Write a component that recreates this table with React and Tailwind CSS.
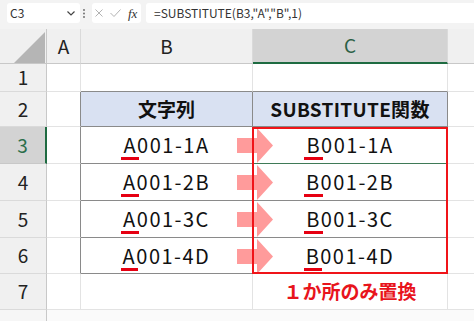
import React from 'react';

const rows = [
  { n: 3, src: '001-1A', out: '001-1A' },
  { n: 4, src: '001-2B', out: '001-2B' },
  { n: 5, src: '001-3C', out: '001-3C' },
  { n: 6, src: '001-4D', out: '001-4D' },
];

// red mark under the replaced letter
const Marked = ({ ch }) => (
  <span className="relative">
    {ch}
    <span className="absolute -left-[2px] -right-[2px] bottom-[-1px] h-[3px] bg-[#e60012]" />
  </span>
);

const Arrow = () => (
  <svg className="absolute z-[5] left-[156px] top-[1px]" width="36" height="35" viewBox="0 0 36 35">
    <polygon points="0,10 20,10 20,0 36,17.5 20,35 20,25 0,25" fill="#ff9b9b" />
  </svg>
);

const rowHead = 'flex items-center justify-center bg-[#f0f0f0] border-r border-b border-r-[#c8c8c8] border-b-[#dadada] text-[19px] text-[#222]';
const blank = 'border-r border-b border-[#e3e3e3] bg-white';

export default function App() {
  return (
    <div className="w-[474px] h-[321px] overflow-hidden bg-[#f3f3f3] font-['Noto_Sans_CJK_JP','Noto_Sans',sans-serif]">
      {/* formula bar */}
      <div className="h-[29px] flex items-start pt-[3px]">
        <div className="ml-[7px] w-[73px] h-[20px] rounded-[3px] bg-white flex items-center justify-between pl-[3px] pr-[5px] text-[12px] text-[#333]">
          <span>C3</span>
          <svg width="8" height="5" viewBox="0 0 8 5">
            <path d="M0.5 0.5 L4 4 L7.5 0.5" fill="none" stroke="#444" strokeWidth="1.2" />
          </svg>
        </div>
        <div className="ml-[2px] w-[4px] h-[20px] flex items-center justify-center">
          <svg width="2" height="9" viewBox="0 0 2 9">
            <circle cx="1" cy="1" r="0.9" fill="#666" />
            <circle cx="1" cy="4.5" r="0.9" fill="#666" />
            <circle cx="1" cy="8" r="0.9" fill="#666" />
          </svg>
        </div>
        <div className="ml-[6px] w-[49px] h-[20px] rounded-[3px] bg-white flex items-center pl-[3px]">
          <svg width="8" height="8" viewBox="0 0 8 8">
            <path d="M0.5 0.5 L7.5 7.5 M7.5 0.5 L0.5 7.5" stroke="#b3b3b3" strokeWidth="1" />
          </svg>
          <svg className="ml-[7px]" width="11" height="8" viewBox="0 0 11 8">
            <path d="M0.5 4 L4 7.5 L10.5 0.5" fill="none" stroke="#b3b3b3" strokeWidth="1" />
          </svg>
          <span className="ml-[7px] font-['Liberation_Serif',serif] italic text-[13px] leading-none text-[#333]">fx</span>
        </div>
        <div className="ml-[5px] flex-1 h-[20px] rounded-l-[3px] bg-white flex items-center pl-[8px] text-[12px] text-[#333]">
          =SUBSTITUTE(B3,"A","B",1)
        </div>
      </div>

      {/* sheet */}
      <div className="grid grid-cols-[47px_34px_172px_195px_1fr] grid-rows-[35px_28px_35px_37px_37px_37px_36px_36px_11px]">
        {/* column headers */}
        <div className="relative bg-[#f0f0f0] border-r border-b border-r-[#c8c8c8] border-b-[#c8c8c8]">
          <svg className="absolute right-[1px] bottom-[0px]" width="31" height="31" viewBox="0 0 31 31">
            <polygon points="31,0 31,31 0,31" fill="#b5b5b5" />
          </svg>
        </div>
        <div className="flex items-center justify-center bg-[#f0f0f0] border-r border-b border-r-[#dadada] border-b-[#c8c8c8] text-[19px] text-[#222]">A</div>
        <div className="flex items-center justify-center bg-[#f0f0f0] border-r border-b border-r-[#dadada] border-b-[#c8c8c8] text-[19px] text-[#222]">B</div>
        <div className="flex items-center justify-center bg-[#d3d3d3] border-r border-b-2 border-r-[#dadada] border-b-[#1e6b41] text-[19px] text-[#2b5f45]">C</div>
        <div className="bg-[#f0f0f0] border-b border-b-[#c8c8c8]" />

        {/* row 1 */}
        <div className={rowHead}>1</div>
        <div className={blank} />
        <div className="border-r border-b border-r-[#e3e3e3] border-b-[#8a8a8a] bg-white" />
        <div className="border-r border-b border-r-[#e3e3e3] border-b-[#8a8a8a] bg-white" />
        <div className="border-b border-[#e3e3e3] bg-white" />

        {/* row 2 */}
        <div className={rowHead}>2</div>
        <div className="border-r border-b border-r-[#8a8a8a] border-b-[#e3e3e3] bg-white" />
        <div className="flex items-center justify-center border-r border-b border-[#8a8a8a] bg-[#d9e1f2] text-[19px] font-bold text-[#111]">文字列</div>
        <div className="flex items-center justify-center border-r border-b border-[#8a8a8a] bg-[#d9e1f2] text-[19px] font-bold text-[#111] tracking-[0.3px]">SUBSTITUTE関数</div>
        <div className="border-b border-[#e3e3e3] bg-white" />

        {/* rows 3-6 */}
        {rows.map((r) => (
          <React.Fragment key={r.n}>
            {r.n === 3 ? (
              <div className="flex items-center justify-center bg-[#d3d3d3] border-r-2 border-b border-r-[#1e6b41] border-b-[#c8c8c8] text-[19px] text-[#2b6e4a]">3</div>
            ) : (
              <div className={rowHead}>{r.n}</div>
            )}
            <div className="border-r border-b border-r-[#8a8a8a] border-b-[#e3e3e3] bg-white" />
            <div className="relative flex items-center justify-center border-r border-b border-[#8a8a8a] bg-white text-[20px] text-[#111] tracking-[1.5px]">
              <span>
                <Marked ch="A" />
                {r.src}
              </span>
              <Arrow />
            </div>
            <div
              className={
                r.n === 3
                  ? 'relative flex items-center justify-center border-r border-b border-r-[#8a8a8a] border-b-[#3f7a57] bg-white text-[20px] text-[#111] tracking-[1.5px]'
                  : 'flex items-center justify-center border-r border-b border-[#8a8a8a] bg-white text-[20px] text-[#111] tracking-[1.5px]'
              }
            >
              <span>
                <Marked ch="B" />
                {r.out}
              </span>
              {r.n === 3 && (
                <div className="absolute z-10 -left-px top-0 w-[196px] h-[147px] border-2 border-[#f01419] pointer-events-none" />
              )}
            </div>
            <div className="border-b border-[#e3e3e3] bg-white" />
          </React.Fragment>
        ))}

        {/* row 7 */}
        <div className={rowHead}>7</div>
        <div className={blank} />
        <div className={blank} />
        <div className="flex items-center justify-center border-r border-b border-[#e3e3e3] bg-white text-[19px] font-bold text-[#e8141c]">１か所のみ置換</div>
        <div className="border-b border-[#e3e3e3] bg-white" />

        {/* trailing strip */}
        <div className="bg-[#f6f6f6] border-r border-r-[#c8c8c8]" />
        <div className="bg-[#fafafa]" />
        <div className="bg-[#fafafa]" />
        <div className="bg-[#fafafa]" />
        <div className="bg-[#fafafa]" />
      </div>
    </div>
  );
}
